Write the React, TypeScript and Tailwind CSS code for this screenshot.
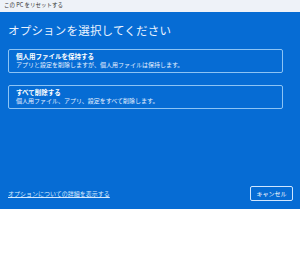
export default function App() {
  const font = { fontFamily: '"Noto Sans CJK JP", "Noto Sans", sans-serif' };
  return (
    <div className="w-[300px] h-[256px] bg-white flex flex-col" style={font}>
      {/* title bar */}
      <div className="h-[12px] bg-[#eef2f8] flex items-center px-[4px]">
        <span className="text-[5.5px] leading-none text-[#333]">この PC をリセットする</span>
      </div>

      {/* blue panel */}
      <div className="h-[197px] bg-[#066cd4] flex flex-col px-[8px]">
        <h1 className="mt-[13px] text-[11.5px] leading-none text-[#eaf3ff] tracking-[0.2px]">
          オプションを選択してください
        </h1>

        <div className="mt-[12px] flex flex-col gap-[12px] w-[275px]">
          <div className="h-[24px] border border-[#8cc4f5] rounded-[2px] flex flex-col justify-center pl-[7px] gap-[2px]">
            <span className="text-[6.5px] leading-none font-bold text-white">個人用ファイルを保持する</span>
            <span className="text-[6px] leading-none text-[#e6f1ff]">アプリと設定を削除しますが、個人用ファイルは保持します。</span>
          </div>
          <div className="h-[24px] border border-[#8cc4f5] rounded-[2px] flex flex-col justify-center pl-[7px] gap-[2px]">
            <span className="text-[6.5px] leading-none font-bold text-white">すべて削除する</span>
            <span className="text-[6px] leading-none text-[#e6f1ff]">個人用ファイル、アプリ、設定をすべて削除します。</span>
          </div>
        </div>

        <div className="mt-auto mb-[8px] flex items-center justify-between">
          <span className="text-[6px] leading-none text-[#d8ebff] underline">オプションについての詳細を表示する</span>
          <div className="w-[43px] h-[15px] border border-[#cfe6ff] rounded-[2px] flex items-center justify-center mr-[-1px]">
            <span className="text-[6px] leading-none text-white">キャンセル</span>
          </div>
        </div>
      </div>

      <div className="flex-1 bg-white" />
    </div>
  );
}
